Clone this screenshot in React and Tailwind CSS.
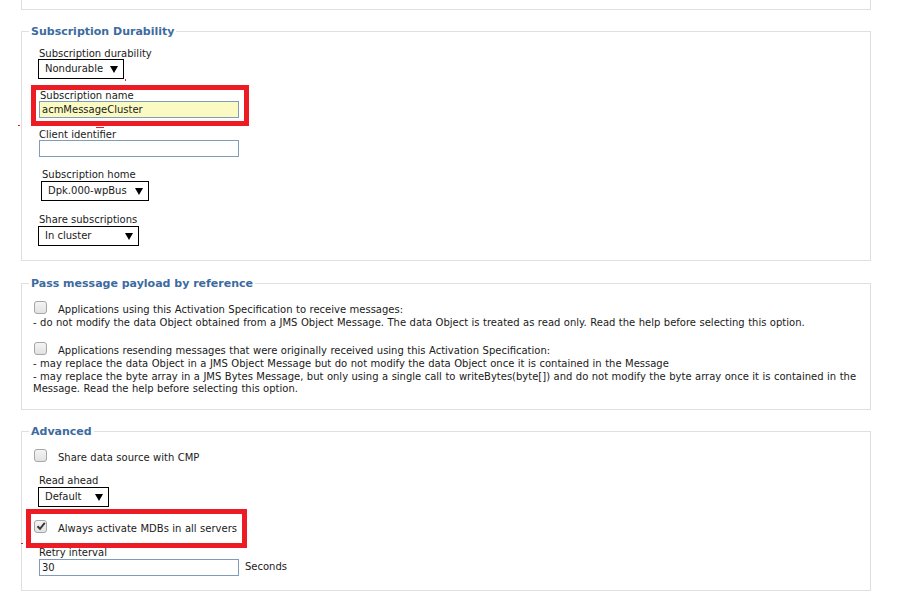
import React from "react";

const Arrow = () => (
  <svg width="8" height="8" viewBox="0 0 8 8" className="shrink-0">
    <path d="M0 1 L8 1 L4 8 Z" fill="#000" />
  </svg>
);

const Select = ({ value, width, className = "" }) => (
  <div
    className={`flex items-center justify-between h-[20px] border border-black bg-white pl-[6px] pr-[5px] text-[10px] leading-[12px] text-[#1a1a1a] ${className}`}
    style={{ width }}
  >
    <span>{value}</span>
    <Arrow />
  </div>
);

const TextBox = ({ value = "", yellow = false }) => (
  <div
    className={`w-[200px] h-[17px] border border-[#7f9db9] pl-[2px] text-[10px] leading-[15px] text-[#1a1a1a] ${
      yellow ? "bg-[#fafac2]" : "bg-white"
    }`}
  >
    {value}
  </div>
);

const Checkbox = ({ checked = false }) => (
  <div className="w-[13px] h-[13px] shrink-0 rounded-[3px] border border-[#a6a6a6] bg-gradient-to-b from-[#f4f4f4] to-[#e2e2e2] flex items-center justify-center">
    {checked && (
      <svg width="10" height="10" viewBox="0 0 10 10">
        <path
          d="M1.5 5.2 L4 7.8 L8.8 1.8"
          fill="none"
          stroke="#3a3a3a"
          strokeWidth="2"
        />
      </svg>
    )}
  </div>
);

const CheckRow = ({ checked, text, className = "" }) => (
  <div className={`flex ${className}`}>
    <div className="mt-[1px]">
      <Checkbox checked={checked} />
    </div>
    <span className="ml-[11px] mt-[4px] leading-[12px] whitespace-nowrap [word-spacing:0.3px]">
      {text}
    </span>
  </div>
);

const Fieldset = ({ title, className = "", children }) => (
  <fieldset
    className={`ml-[21px] w-[850px] border border-[#dfdfdf] ${className}`}
  >
    <legend className="ml-[7px] px-[2px] text-[11px] leading-[13px] font-bold text-[#3b6ba0]">
      {title}
    </legend>
    {children}
  </fieldset>
);

export default function App() {
  return (
    <div className="relative w-[897px] h-[597px] overflow-hidden bg-white text-[10px] leading-[12px] text-[#1a1a1a] font-['DejaVu_Sans',sans-serif]">
      {/* tail of the previous panel */}
      <div className="ml-[21px] w-[850px] h-[10px] border-x border-b border-[#dfdfdf]" />

      <Fieldset title="Subscription Durability" className="mt-[15px] pb-[14px]">
        <div className="pl-[17px] mt-[9px] pt-[1px] leading-[11px]">Subscription durability</div>
        <Select value="Nondurable" width={86} className="ml-[16px]" />

        <div className="ml-[9px] mt-[6px] w-[218px] h-[41px] border-[5px] border-[#ed1c24] pl-[3px]">
          <div className="ml-[1px] leading-[11px]">Subscription name</div>
          <TextBox value="acmMessageCluster" yellow />
        </div>

        <div className="pl-[17px] mt-[3px] leading-[11px]">Client identifier</div>
        <div className="ml-[17px]">
          <TextBox />
        </div>

        <div className="pl-[20px] mt-[12px]">Subscription home</div>
        <Select value="Dpk.000-wpBus" width={108} className="ml-[19px]" />

        <div className="pl-[17px] mt-[13px]">Share subscriptions</div>
        <Select value="In cluster" width={101} className="ml-[16px]" />
      </Fieldset>

      <Fieldset title="Pass message payload by reference" className="mt-[16px] pb-[13px]">
        <div className="pl-[11px] [word-spacing:0.3px]">
          <CheckRow
            className="mt-[10px] ml-[1px]"
            text="Applications using this Activation Specification to receive messages:"
          />
          <div className="mt-[1px] whitespace-nowrap">
            - do not modify the data Object obtained from a JMS Object Message. The data Object is treated as read only. Read the help before selecting this option.
          </div>

          <CheckRow
            className="mt-[12px] ml-[1px]"
            text="Applications resending messages that were originally received using this Activation Specification:"
          />
          <div className="mt-[1px] leading-[12.5px] whitespace-nowrap">
            <div>- may replace the data Object in a JMS Object Message but do not modify the data Object once it is contained in the Message</div>
            <div>- may replace the byte array in a JMS Bytes Message, but only using a single call to writeBytes(byte[]) and do not modify the byte array once it is contained in the</div>
            <div>Message. Read the help before selecting this option.</div>
          </div>
        </div>
      </Fieldset>

      <Fieldset title="Advanced" className="mt-[15px] pb-[14px]">
        <CheckRow className="mt-[10px] ml-[12px]" text="Share data source with CMP" />

        <div className="pl-[17px] mt-[11px]">Read ahead</div>
        <Select value="Default" width={71} className="ml-[16px]" />

        <div className="ml-[4px] mt-[2px] w-[221px] border-[5px] border-[#ed1c24] pt-[5px] pb-[8px]">
          <CheckRow className="ml-[3px]" checked text="Always activate MDBs in all servers" />
        </div>

        <div className="pl-[17px] -mt-[1px]">Retry interval</div>
        <div className="ml-[17px] flex items-center">
          <TextBox value="30" />
          <span className="ml-[6px]">Seconds</span>
        </div>
      </Fieldset>

      {/* stray annotation marks */}
      <span className="absolute left-[125px] top-[79px] w-[1px] h-[2px] bg-[#ed1c24]" />
      <span className="absolute left-[18px] top-[125px] w-[2px] h-[1px] bg-[#ed1c24]" />
      <span className="absolute left-[96px] top-[127px] w-[8px] h-[1px] bg-[#ed1c24]" />
      <span className="absolute left-[21px] top-[543px] w-[2px] h-[1px] bg-[#ed1c24]" />
    </div>
  );
}
